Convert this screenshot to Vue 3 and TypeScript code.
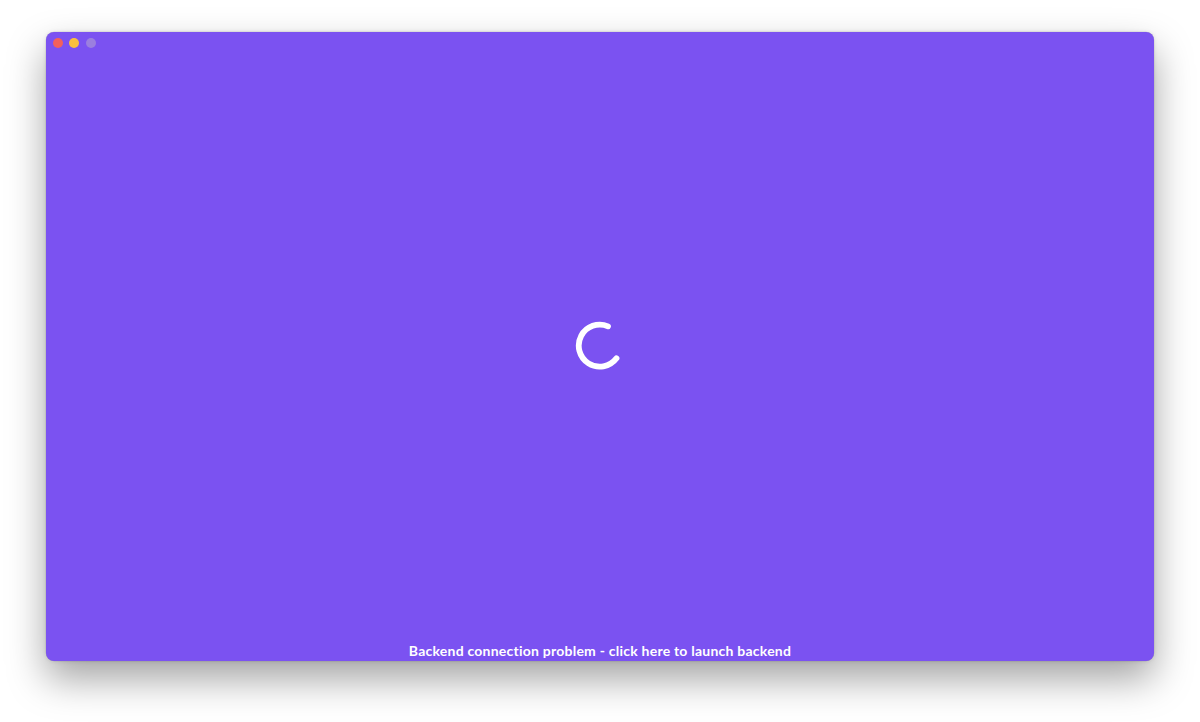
<script setup lang="ts">
const lights: string[] = ['red', 'yellow', 'gray']
</script>

<template>
  <div class="page">
    <main class="window">
      <div class="lights">
        <span v-for="l in lights" :key="l" class="light" :class="l"></span>
      </div>
      <div class="center">
        <svg class="spinner" width="50" height="52" viewBox="0 0 50 52" fill="none">
          <path d="M 33 5.3 A 21 21 0 1 0 41.5 37.3" stroke="#fff" stroke-width="5.8" stroke-linecap="round" />
        </svg>
      </div>
      <div class="notice">Backend connection problem - click here to launch backend</div>
    </main>
  </div>
</template>

<style>
html, body { margin: 0; background: #fff; }
</style>

<style scoped>
.page {
  width: 1200px;
  height: 722px;
  box-sizing: border-box;
  padding: 31.5px 46px 61.5px;
  display: flex;
  overflow: hidden;
  background: #fff;
}
.window {
  flex: 1;
  display: flex;
  flex-direction: column;
  border-radius: 8px;
  background: #7b52f1;
  box-shadow: 0 0 0 0.25px rgba(0, 0, 0, 0.18), 0 0 4px rgba(0, 0, 0, 0.1), 0 18px 38px rgba(0, 0, 0, 0.36);
}
.lights {
  display: flex;
  gap: 6.4px;
  padding: 6.5px 0 0 7px;
}
.light {
  width: 10px;
  height: 10px;
  border-radius: 50%;
}
.red { background: #f2605c; }
.yellow { background: #fac03e; }
.gray { background: #9b7fdf; }
.center {
  flex: 1;
  display: flex;
  align-items: center;
  justify-content: center;
  padding-top: 6px;
}
.notice {
  height: 20px;
  line-height: 20px;
  text-align: center;
  color: #fff;
  font-family: Lato, "Noto Sans", sans-serif;
  font-weight: 700;
  font-size: 14px;
  letter-spacing: 0.23px;
}
</style>
